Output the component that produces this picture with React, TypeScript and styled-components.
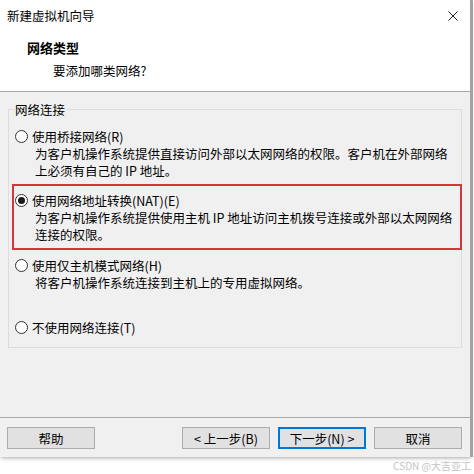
import * as React from 'react';
import styled, { createGlobalStyle } from 'styled-components';

const GlobalStyle = createGlobalStyle`
  html, body {
    margin: 0;
    padding: 0;
    background: #ffffff;
  }
  body {
    font-family: "Noto Sans CJK SC", "Noto Sans", sans-serif;
    color: #000;
  }
`;

const Page = styled.div`
  width: 474px;
  height: 474px;
  overflow: hidden;
`;

const Window = styled.div`
  width: 470px;
  height: 457px;
  display: flex;
  flex-direction: column;
  background: #f0f0f0;
  box-shadow: 3px 0 0 #a3a3a3, 1px 1px 4px rgba(0, 0, 0, 0.35);
`;

const TitleBar = styled.div`
  height: 31px;
  flex: none;
  display: flex;
  align-items: center;
  justify-content: space-between;
  padding-left: 7px;
  background: #ffffff;
  font-size: 12.5px;
  line-height: 17px;
`;

const CloseBox = styled.div`
  width: 10px;
  height: 10px;
  margin-right: 12px;
  display: flex;
`;

const Header = styled.div`
  height: 60px;
  flex: none;
  background: #ffffff;
  border-bottom: 1px solid #a8a8a8;
  padding: 7.5px 0 0 27px;
  box-sizing: content-box;
  height: 52.5px;
`;

const Heading = styled.div`
  font-size: 13px;
  font-weight: 700;
  line-height: 17px;
`;

const SubHeading = styled.div`
  font-size: 12.5px;
  line-height: 17px;
  margin: 6px 0 0 26px;
`;

const Body = styled.div`
  flex: 1;
  padding: 8.5px 8px 0 8px;
`;

const Group = styled.fieldset`
  margin: 0;
  padding: 10px 1px 11px 6px;
  border: 1px solid #dcdcdc;
  display: flex;
  flex-direction: column;
`;

const Legend = styled.legend`
  padding: 0 2px 0 0;
  font-size: 12.5px;
  line-height: 17px;
`;

const Option = styled.div<{ $marked?: boolean; $offset?: number }>`
  position: relative;
  margin-top: ${p => p.$offset ?? 0}px;
  font-size: 12.5px;
  line-height: 17px;
  white-space: nowrap;

  ${p => p.$marked && `
    &::after {
      content: "";
      position: absolute;
      top: -7.5px;
      bottom: -7.5px;
      left: -3px;
      right: -2px;
      border: 2px solid #d8343c;
      pointer-events: none;
    }
  `}
`;

const RadioRow = styled.div`
  display: flex;
  align-items: center;
  height: 17px;
`;

const RadioCircle = styled.span<{ $checked?: boolean }>`
  width: 13px;
  height: 13px;
  box-sizing: border-box;
  border-radius: 50%;
  border: 1px solid #333333;
  background: #ffffff;
  margin-right: 4px;
  display: flex;
  align-items: center;
  justify-content: center;

  &::before {
    content: "";
    width: 7px;
    height: 7px;
    border-radius: 50%;
    background: ${p => (p.$checked ? '#1a1a1a' : 'transparent')};
  }
`;

const Description = styled.div`
  padding-left: 20px;
`;

const Footer = styled.div`
  flex: none;
  display: flex;
  align-items: center;
  gap: 8px;
  border-top: 1px solid #a8a8a8;
  padding: 9px 8px 8px 7px;
`;

const Button = styled.button<{ $default?: boolean; $push?: boolean }>`
  width: 88px;
  height: 22px;
  box-sizing: border-box;
  margin: 0;
  margin-right: ${p => (p.$push ? 'auto' : '0')};
  padding: 0;
  font-family: inherit;
  font-size: 12.5px;
  line-height: 17px;
  color: #000;
  background: #e1e1e1;
  border: ${p => (p.$default ? '2px solid #0078d7' : '1px solid #adadad')};
`;

const Watermark = styled.div`
  text-align: right;
  padding-right: 3px;
  margin-top: 3px;
  font-size: 10px;
  line-height: 12px;
  color: #c4c4c4;
`;

const options = [
  {
    label: '使用桥接网络(R)',
    lines: ['为客户机操作系统提供直接访问外部以太网网络的权限。客户机在外部网络', '上必须有自己的 IP 地址。'],
    offset: 0,
  },
  {
    label: '使用网络地址转换(NAT)(E)',
    lines: ['为客户机操作系统提供使用主机 IP 地址访问主机拨号连接或外部以太网网络', '连接的权限。'],
    offset: 13,
    checked: true,
  },
  {
    label: '使用仅主机模式网络(H)',
    lines: ['将客户机操作系统连接到主机上的专用虚拟网络。'],
    offset: 14,
  },
  {
    label: '不使用网络连接(T)',
    lines: [],
    offset: 28,
  },
];

export default function App() {
  return (
    <Page>
      <GlobalStyle />
      <Window>
        <TitleBar>
          <span>新建虚拟机向导</span>
          <CloseBox>
            <svg width="10" height="10" viewBox="0 0 10 10">
              <path d="M0.5 0.5 L9.5 9.5 M9.5 0.5 L0.5 9.5" stroke="#222" strokeWidth="1" fill="none" />
            </svg>
          </CloseBox>
        </TitleBar>
        <Header>
          <Heading>网络类型</Heading>
          <SubHeading>要添加哪类网络?</SubHeading>
        </Header>
        <Body>
          <Group>
            <Legend>网络连接</Legend>
            {options.map(o => (
              <Option key={o.label} $offset={o.offset} $marked={o.checked}>
                <RadioRow>
                  <RadioCircle $checked={o.checked} />
                  <span>{o.label}</span>
                </RadioRow>
                {o.lines.map(l => (
                  <Description key={l}>{l}</Description>
                ))}
              </Option>
            ))}
          </Group>
        </Body>
        <Footer>
          <Button $push>帮助</Button>
          <Button>&lt; 上一步(B)</Button>
          <Button $default>下一步(N) &gt;</Button>
          <Button>取消</Button>
        </Footer>
      </Window>
      <Watermark>CSDN @大吉亚工</Watermark>
    </Page>
  );
}
